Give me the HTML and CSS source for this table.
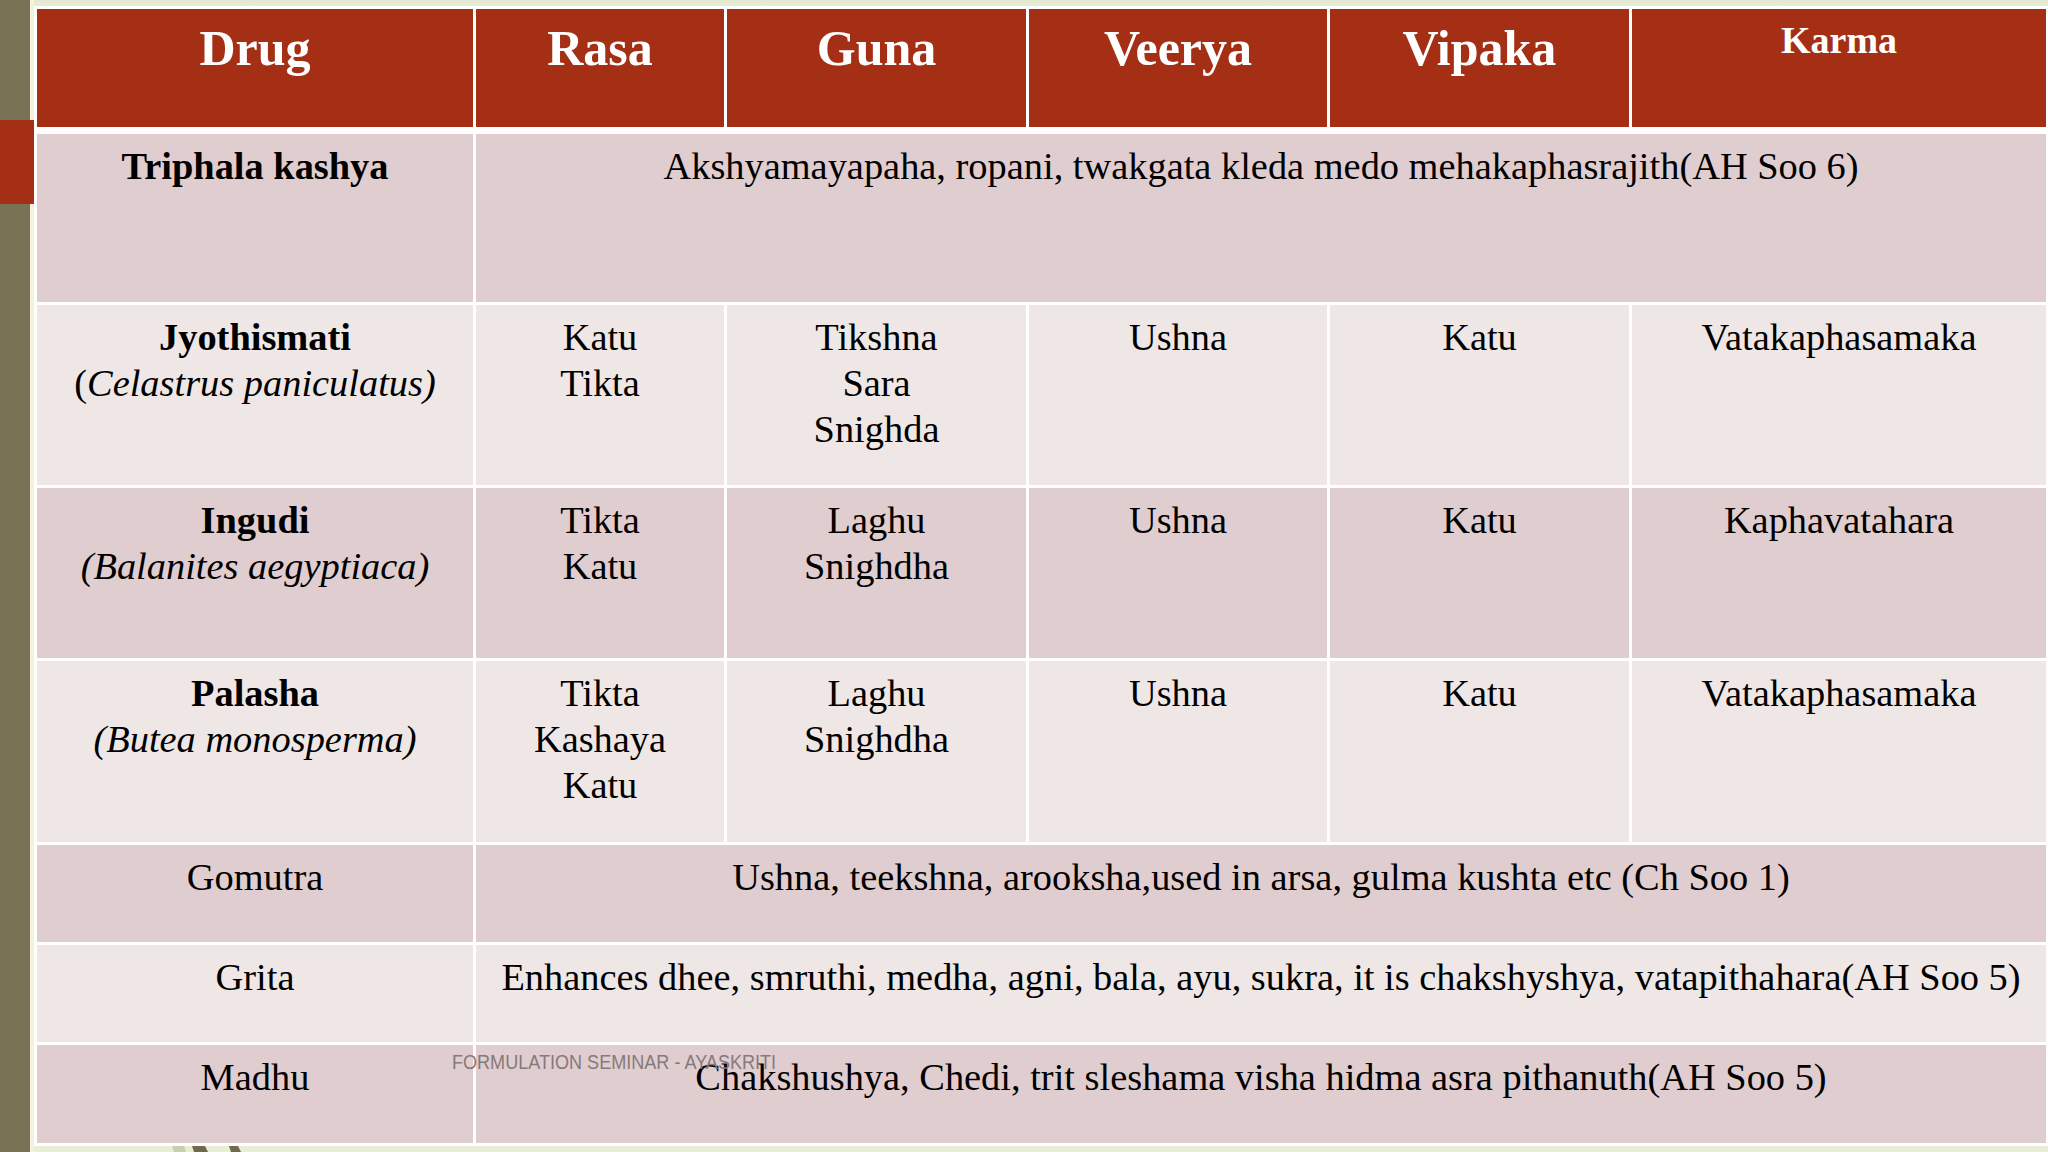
FILE: index.html
```html
<!DOCTYPE html>
<html lang="en">
<head>
<meta charset="utf-8">
<title>Formulation Seminar - Drug properties</title>
<link rel="stylesheet" href="styles.css">
</head>
<body>
<div class="slide">
  <aside class="rail">
    <div class="rail-mark"></div>
  </aside>
  <main class="content">
    <table class="grid">
      <colgroup>
        <col class="c-drug">
        <col class="c-rasa">
        <col class="c-guna">
        <col class="c-veerya">
        <col class="c-vipaka">
        <col class="c-karma">
      </colgroup>
      <thead>
        <tr class="r-head">
          <th>Drug</th>
          <th>Rasa</th>
          <th>Guna</th>
          <th>Veerya</th>
          <th>Vipaka</th>
          <th class="th-small">Karma</th>
        </tr>
      </thead>
      <tbody>
        <tr class="r-1 pink">
          <td><b>Triphala kashya</b></td>
          <td colspan="5" class="span">Akshyamayapaha, ropani, twakgata kleda medo mehakaphasrajith(AH Soo 6)</td>
        </tr>
        <tr class="r-2 light">
          <td><b>Jyothismati</b><br>(<i>Celastrus paniculatus)</i></td>
          <td>Katu<br>Tikta</td>
          <td>Tikshna<br>Sara<br>Snighda</td>
          <td>Ushna</td>
          <td>Katu</td>
          <td>Vatakaphasamaka</td>
        </tr>
        <tr class="r-3 pink">
          <td><b>Ingudi</b><br><i>(Balanites aegyptiaca)</i></td>
          <td>Tikta<br>Katu</td>
          <td>Laghu<br>Snighdha</td>
          <td>Ushna</td>
          <td>Katu</td>
          <td>Kaphavatahara</td>
        </tr>
        <tr class="r-4 light">
          <td><b>Palasha</b><br><i>(Butea monosperma)</i></td>
          <td>Tikta<br>Kashaya<br>Katu</td>
          <td>Laghu<br>Snighdha</td>
          <td>Ushna</td>
          <td>Katu</td>
          <td>Vatakaphasamaka</td>
        </tr>
        <tr class="r-5 pink">
          <td>Gomutra</td>
          <td colspan="5" class="span">Ushna, teekshna, arooksha,used in arsa, gulma kushta etc (Ch Soo 1)</td>
        </tr>
        <tr class="r-6 light">
          <td>Grita</td>
          <td colspan="5" class="span">Enhances dhee, smruthi, medha, agni, bala, ayu, sukra, it is chakshyshya, vatapithahara(AH Soo 5)</td>
        </tr>
        <tr class="r-7 pink">
          <td>Madhu</td>
          <td colspan="5" class="span">Chakshushya, Chedi, trit sleshama visha hidma asra pithanuth(AH Soo 5)</td>
        </tr>
      </tbody>
    </table>
    <div class="footer-strip">
      <svg class="decor" width="80" height="6" viewBox="0 0 80 6" aria-hidden="true">
        <polygon points="0,0 12,0 14,6 2,6" fill="#c9cfae"/>
        <polygon points="20,0 33,0 36,6 22,6" fill="#6f6a4c"/>
        <polygon points="57,0 66,0 69,6 59,6" fill="#6f6a4c"/>
      </svg>
    </div>
    <div class="watermark"><span class="watermark-text">FORMULATION SEMINAR - AYASKRITI</span></div>
  </main>
</div>
</body>
</html>
```

FILE: styles.css
```css
html, body {
  margin: 0;
  padding: 0;
}

body {
  width: 2048px;
  height: 1152px;
  overflow: hidden;
  background: #e7ecd4;
  font-family: "Liberation Serif", "Times New Roman", serif;
}

.slide {
  display: flex;
  width: 2048px;
  height: 1152px;
  background: linear-gradient(to bottom, #e3e9cf 0, #eef0dc 10px, #e8edd5 100%);
}

.rail {
  flex: 0 0 33px;
  display: flex;
  flex-direction: column;
  background: linear-gradient(to right, #7a7254 0, #7a7254 30px, #f3f2dc 30px, #f3f2dc 33px);
}

.rail-mark {
  margin-top: 120px;
  width: 34px;
  height: 84px;
  background: #a52f14;
}

.content {
  position: relative;
  flex: 1 1 auto;
  display: flex;
  flex-direction: column;
  padding-top: 6px;
}

.grid {
  table-layout: fixed;
  width: 2015px;
  border-collapse: separate;
  border-spacing: 3px;
  background: #ffffff;
  color: #000;
}

.c-drug   { width: 436px; }
.c-rasa   { width: 248px; }
.c-guna   { width: 299px; }
.c-veerya { width: 298px; }
.c-vipaka { width: 299px; }
.c-karma  { width: 414px; }

.grid th,
.grid td {
  padding: 0;
  text-align: center;
  vertical-align: top;
  box-sizing: border-box;
}

.grid th {
  background: #a52f14;
  color: #ffffff;
  font-size: 50px;
  font-weight: bold;
  line-height: 58px;
  padding-top: 10px;
  border-bottom: 4px solid #ffffff;
}

.grid th.th-small {
  font-size: 38px;
  line-height: 44px;
  padding-top: 9px;
}

.grid td {
  font-size: 38.4px;
  line-height: 46px;
  padding-top: 9px;
}

.grid td.span {
  white-space: nowrap;
}

.r-head { height: 122px; }
.r-1 { height: 168px; }
.r-2 { height: 180px; }
.r-3 { height: 170px; }
.r-4 { height: 181px; }
.r-5 { height: 97px; }
.r-6 { height: 97px; }
.r-7 { height: 98px; }

.pink td  { background: #e0cdcf; }
.light td { background: #eee7e6; }

.footer-strip {
  height: 6px;
  padding-left: 138px;
}

.decor {
  display: block;
}

.watermark {
  position: absolute;
  left: 418px;
  top: 1050px;
  white-space: nowrap;
}

.watermark-text {
  display: inline-block;
  font-family: "Liberation Sans", Arial, sans-serif;
  font-size: 21px;
  color: #857a7c;
  transform: scaleX(0.86);
  transform-origin: left center;
}
```
